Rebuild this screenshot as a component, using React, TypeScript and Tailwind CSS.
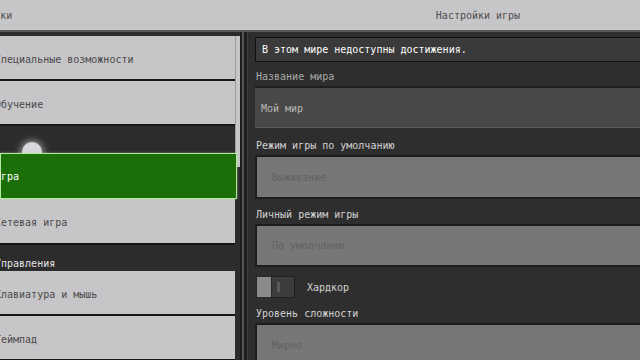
import React from 'react';

type NavItem = { label: string; kind: 'button' | 'active' | 'section'; h: string };

const navItems: NavItem[] = [
  { label: 'Специальные возможности', kind: 'button', h: 'h-[45px]' },
  { label: 'Обучение', kind: 'button', h: 'h-[45px]' },
  { label: '', kind: 'section', h: 'h-[27px]' },
  { label: 'Игра', kind: 'active', h: 'h-[46px]' },
  { label: 'Сетевая игра', kind: 'button', h: 'h-[46px]' },
  { label: 'Управления', kind: 'section', h: 'h-[26px]' },
  { label: 'Клавиатура и мышь', kind: 'button', h: 'h-[45px]' },
  { label: 'Геймпад', kind: 'button', h: 'h-[45px]' },
];

function NavRow({ item }: { item: NavItem }) {
  if (item.kind === 'section') {
    return (
      <div className={`flex ${item.h} shrink-0 items-end pb-[1px] text-[#e4e4e4]`}>
        <span className="-ml-[5px]">{item.label}</span>
      </div>
    );
  }
  if (item.kind === 'active') {
    return (
      <div
        className={`relative z-10 flex ${item.h} w-[237px] shrink-0 items-center border border-[#b2eaa2] bg-[#1b6e08] pt-[2px] text-white shadow-[0_0_2px_rgba(170,240,150,0.6)]`}
      >
        <span className="-ml-[6px]">{item.label}</span>
      </div>
    );
  }
  return (
    <div className={`flex ${item.h} shrink-0 items-center border-b-2 border-[#161616] bg-[#c6c5c7] pt-[4px] text-[#4a4a4a]`}>
      <span className="-ml-[5px]">{item.label}</span>
    </div>
  );
}

function FieldLabel({ text, h, dim }: { text: string; h: string; dim?: boolean }) {
  return (
    <div className={`flex ${h} shrink-0 items-end pb-[3px] pl-[1px] ${dim ? 'text-[#a8a8a8]' : 'text-[#d2d2d2]'}`}>
      {text}
    </div>
  );
}

function Dropdown({ value, h }: { value: string; h: string }) {
  return (
    <div className={`flex ${h} shrink-0 items-center border-2 border-r-0 border-[#1c1c1c] bg-[#777777] pl-[15px] pt-[1px] text-[#616161]`}>
      {value}
    </div>
  );
}

export default function App() {
  return (
    <div className="relative h-[360px] w-[640px] overflow-hidden bg-[#2c2c2c] font-['DejaVu_Sans_Mono',monospace] text-[10px] leading-[12px]">
      <div className="flex h-[360px] w-[708px] flex-col">
        <header className="flex h-[32px] shrink-0 items-center border-b-2 border-[#585858] bg-[#c6c5c7] pt-[2px] text-[#505050]">
          <div className="w-[248px]">
            <span className="-ml-[42px] inline-block">Настройки</span>
          </div>
          <div className="flex-1 text-center">Настройки игры</div>
        </header>

        <div className="flex min-h-0 flex-1">
          <aside className="flex w-[240px] shrink-0 bg-[#2c2c2c]">
            <div className="flex w-[235px] flex-col pt-[4px]">
              {navItems.map((item, i) => (
                <NavRow key={i} item={item} />
              ))}
            </div>
            <div className="w-[5px] pt-[4px]">
              <div className="h-[131px] border-l border-[#9c9c9c] bg-[#c6c5c7]" />
            </div>
          </aside>

          <div className="flex w-[8px] shrink-0 bg-[#1e1e1e]">
            <div className="ml-[2px] w-[2px] bg-[#545454]" />
            <div className="ml-[3px] w-[1px] bg-[#3e3e3e]" />
          </div>

          <main className="flex flex-1 flex-col overflow-hidden bg-[#2e2e2e] pl-[7px] pt-[5px]">
            <div className="flex h-[25px] shrink-0 items-center border border-r-0 border-[#111111] bg-[#3a3a3a] pl-[6px] text-white">
              В этом мире недоступны достижения.
            </div>

            <FieldLabel text="Название мира" h="h-[24px]" dim />
            <div className="flex h-[42px] shrink-0 items-center border-t-2 border-b border-t-[#1e1e1e] border-b-[#5a5a5a] bg-[#484848] pl-[6px] pt-[3px] text-[#bababa]">
              Мой мир
            </div>

            <FieldLabel text="Режим игры по умолчанию" h="h-[27px]" />
            <Dropdown value="Выживание" h="h-[44px]" />

            <FieldLabel text="Личный режим игры" h="h-[25px]" />
            <Dropdown value="По умолчанию" h="h-[43px]" />

            <div className="mt-[9px] flex h-[22px] shrink-0 items-center">
              <div className="ml-[1px] flex h-[22px]">
                <div className="h-[22px] w-[16px] border border-[#2a2a2a] bg-[#8a8a8a]" />
                <div className="flex h-[22px] w-[23px] items-center border border-l-0 border-[#1e1e1e] bg-[#3c3c3c] pl-[5px]">
                  <div className="h-[10px] w-[3px] bg-[#5a5a5a]" />
                </div>
              </div>
              <span className="ml-[12px] pt-[2px] text-[#d2d2d2]">Хардкор</span>
            </div>

            <FieldLabel text="Уровень сложности" h="h-[25px]" />
            <Dropdown value="Мирно" h="h-[44px]" />
          </main>
        </div>
      </div>

      <div className="absolute left-[22px] top-[142px] h-[20px] w-[20px] rounded-full bg-[#d8d8de] shadow-[0_0_6px_2px_rgba(255,255,255,0.45)]" />
    </div>
  );
}
